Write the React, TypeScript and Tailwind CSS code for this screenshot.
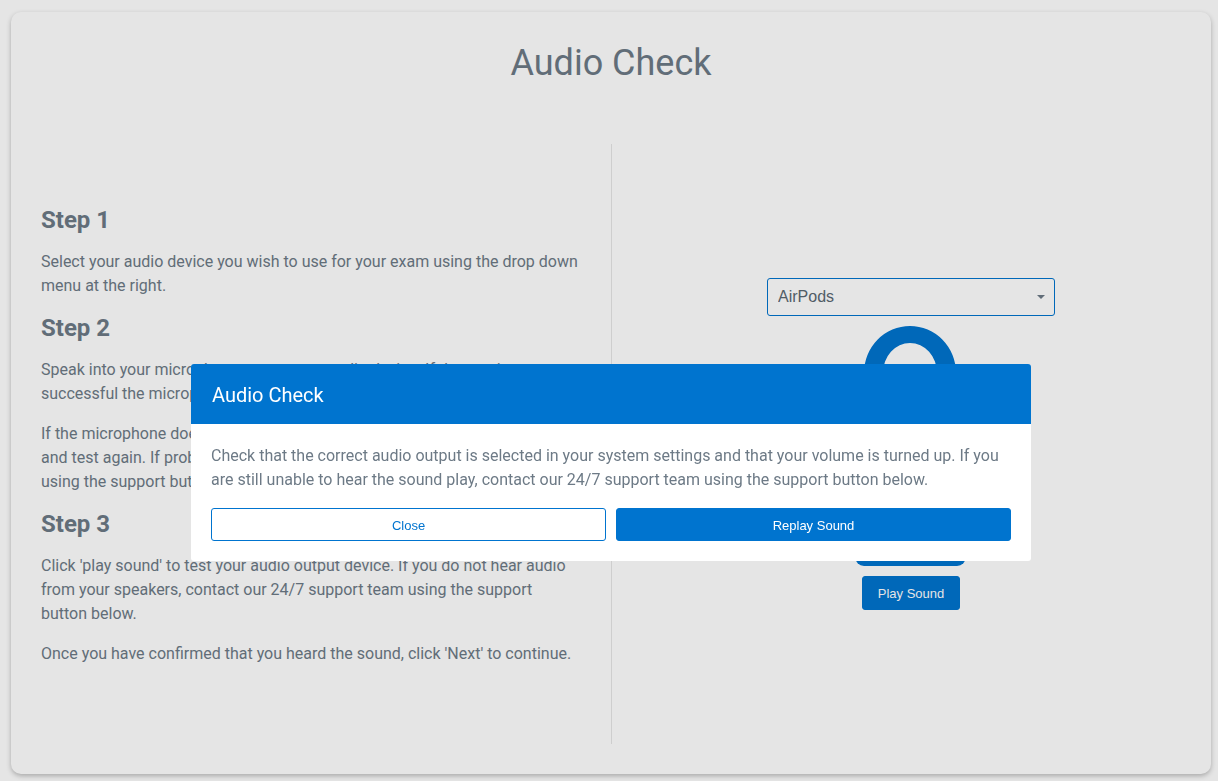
import { useId, useState } from "react";

const devices = ["AirPods", "Built-in Speakers", "System Default"];

const buttonBase =
  "rounded-[3px] border border-[#0074cf] font-['Liberation_Sans',sans-serif] text-[13px] leading-[15px]";

interface StepProps {
  title: string;
  paragraphs: string[];
}

const steps: StepProps[] = [
  {
    title: "Step 1",
    paragraphs: [
      "Select your audio device you wish to use for your exam using the drop down menu at the right.",
    ],
  },
  {
    title: "Step 2",
    paragraphs: [
      "Speak into your microphone to test your audio device. If the test is successful the microphone icon will turn green.",
      "If the microphone does not turn green, please select a different audio device and test again. If problems persist, please contact our 24/7 support team using the support button below.",
    ],
  },
  {
    title: "Step 3",
    paragraphs: [
      "Click 'play sound' to test your audio output device. If you do not hear audio from your speakers, contact our 24/7 support team using the support button below.",
      "Once you have confirmed that you heard the sound, click 'Next' to continue.",
    ],
  },
];

const Step = ({ title, paragraphs }: StepProps) => (
  <section>
    <h2 className="mb-4 text-2xl leading-7 font-bold">{title}</h2>
    {paragraphs.map((text) => (
      <p key={text} className="mb-4">
        {text}
      </p>
    ))}
  </section>
);

const Microphone = () => (
  <svg
    viewBox="0 0 160 240"
    className="my-[10px] h-60 w-40"
    fill="none"
    stroke="#0074cf"
    aria-hidden="true"
  >
    <path
      d="M33 47a46 47 0 0 1 92 0v76a46 47 0 0 1-92 0Zm19 0v76a27 29 0 0 0 54 0V47a27 30 0 0 0-54 0Z"
      fill="#0074cf"
      fillRule="evenodd"
      stroke="none"
    />
    <path d="M9 96v28a70 70 0 0 0 141 0V96M79 194v36" strokeWidth="17" strokeLinecap="round" />
    <rect x="24" y="222" width="111" height="18" rx="9" fill="#0074cf" stroke="none" />
  </svg>
);

export default function App() {
  const [device, setDevice] = useState(devices[0]);
  const [open, setOpen] = useState(true);
  const titleId = useId();

  return (
    <div className="min-h-screen bg-white pt-3 pr-[7px] pb-[7px] pl-[11px] font-[Roboto,sans-serif] text-base leading-6 text-[#6d7a86]">
      <main className="flex min-h-[762px] flex-col rounded-[10px] bg-white pt-6 pb-[30px] shadow-[0_2px_5px_rgba(0,0,0,0.26)]">
        <h1 className="mb-[54px] text-center text-4xl leading-[54px]">Audio Check</h1>
        <div className="grid flex-1 grid-cols-2">
          <div className="flex flex-col justify-center px-[30px]">
            {steps.map((step) => (
              <Step key={step.title} {...step} />
            ))}
          </div>
          <div className="flex flex-col items-center justify-center border-l border-[#e6e6e6] pr-px">
            <div className="relative w-72">
              <select
                aria-label="Audio device"
                value={device}
                onChange={(e) => setDevice(e.target.value)}
                className="h-[38px] w-full appearance-none rounded-[3px] border border-[#0074cf] bg-white px-[10px] font-['Liberation_Sans',sans-serif] text-base text-[#5a6872]"
              >
                {devices.map((name) => (
                  <option key={name}>{name}</option>
                ))}
              </select>
              <span className="pointer-events-none absolute top-[17px] right-[10px] border-x-4 border-t-4 border-x-transparent border-t-[#6d7a86]" />
            </div>
            <Microphone />
            <button
              type="button"
              onClick={() => setOpen(true)}
              className={`${buttonBase} h-[34px] w-[98px] bg-[#0074cf] text-white`}
            >
              Play Sound
            </button>
          </div>
        </div>
      </main>

      {open && (
        <div className="fixed inset-0 flex items-center justify-center bg-black/10 pt-36 pr-[7px] pl-[11px]">
          <div
            role="dialog"
            aria-modal="true"
            aria-labelledby={titleId}
            className="w-full max-w-[840px] overflow-hidden rounded-[3px] bg-white"
          >
            <h2
              id={titleId}
              className="bg-[#0074cf] px-[21px] pt-[17px] pb-[15px] text-xl leading-7 text-white"
            >
              Audio Check
            </h2>
            <div className="p-5">
              <p className="mb-4">
                Check that the correct audio output is selected in your system settings and that
                your volume is turned up. If you are still unable to hear the sound play, contact
                our 24/7 support team using the support button below.
              </p>
              <div className="grid grid-cols-2 gap-[10px]">
                <button
                  type="button"
                  onClick={() => setOpen(false)}
                  className={`${buttonBase} h-[33px] bg-white pt-[2px] text-[#0074cf]`}
                >
                  Close
                </button>
                <button
                  type="button"
                  className={`${buttonBase} h-[33px] bg-[#0074cf] pt-[2px] text-white`}
                >
                  Replay Sound
                </button>
              </div>
            </div>
          </div>
        </div>
      )}
    </div>
  );
}
